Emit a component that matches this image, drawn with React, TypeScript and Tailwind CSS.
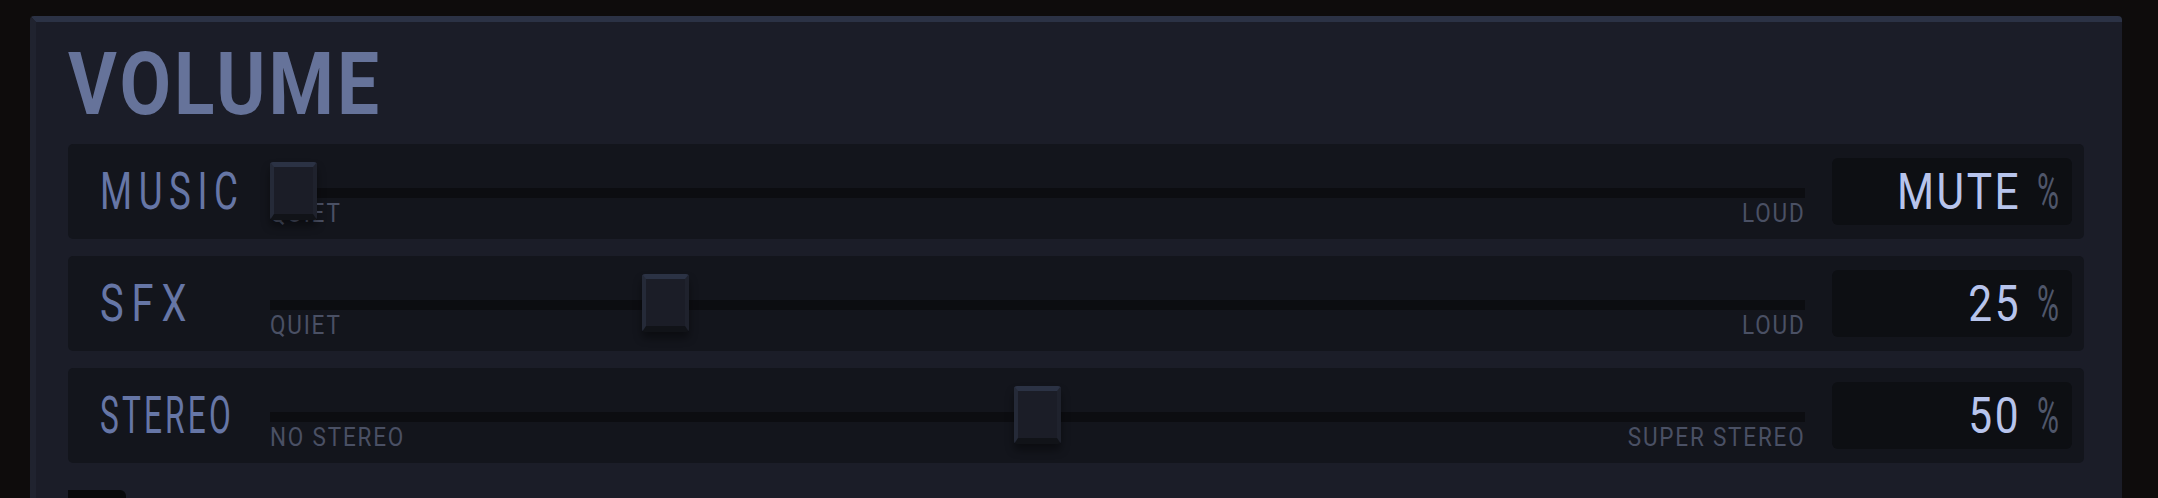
interface Channel {
  name: string;
  nameClass: string;
  value: number;
  display: string;
  low: string;
  high: string;
}

const channels: Channel[] = [
  {
    name: 'MUSIC',
    nameClass: 'scale-x-[0.72] tracking-[0.18em]',
    value: 0,
    display: 'MUTE',
    low: 'QUIET',
    high: 'LOUD',
  },
  {
    name: 'SFX',
    nameClass: 'scale-x-[0.78] tracking-[0.2em]',
    value: 25,
    display: '25',
    low: 'QUIET',
    high: 'LOUD',
  },
  {
    name: 'STEREO',
    nameClass: 'scale-x-[0.62] tracking-[0.1em]',
    value: 50,
    display: '50',
    low: 'NO STEREO',
    high: 'SUPER STEREO',
  },
];

function Row({ ch }: { ch: Channel }) {
  return (
    <div className="flex h-[95px] items-center rounded-[5px] bg-[#13151c] pl-8 pr-3">
      <div className="w-[170px] shrink-0">
        <span className={`inline-block origin-left text-[51px] leading-none text-[#6676a6] ${ch.nameClass}`}>
          {ch.name}
        </span>
      </div>

      <div className="relative h-full flex-1 pt-[44px]">
        <div className="h-[10px] bg-[#0c0d11]" />
        <div className="mt-[3px] flex justify-between text-[25px] leading-none tracking-[0.08em] text-[#4a5064]">
          <span className="inline-block origin-left scale-x-[0.9]">{ch.low}</span>
          <span className="inline-block origin-right scale-x-[0.9]">{ch.high}</span>
        </div>
        <div
          className="absolute top-[18px] h-[58px] w-[47px] rounded-[3px] border-t-[5px] border-r-[4px] border-b-[6px] border-l-[4px] border-t-[#2b3244] border-r-[#1f222d] border-b-[#111318] border-l-[#252a38] bg-[#1b1d27] shadow-[0_6px_8px_rgba(0,0,0,0.4)]"
          style={{ left: `calc(${ch.value / 100} * (100% - 47px))` }}
        />
      </div>

      <div className="ml-[27px] flex h-[67px] w-[240px] shrink-0 items-center justify-end rounded-[6px] bg-[#0d0f13] pr-[15px]">
        <span className="mr-[16px] inline-block origin-right scale-x-[0.85] text-[50px] leading-none tracking-[0.06em] text-[#b7c4ec]">
          {ch.display}
        </span>
        <span className="w-[20px]">
          <span className="inline-block origin-left scale-x-[0.6] text-[50px] leading-none text-[#4f566a]">%</span>
        </span>
      </div>
    </div>
  );
}

export default function App() {
  return (
    <div className="h-[498px] w-full overflow-hidden bg-[#0e0c0c] pl-[30px] pr-[36px] pt-[16px] font-['Roboto',sans-serif]">
      <div className="rounded-t-[4px] border-t-[6px] border-l-[6px] border-t-[#2b3245] border-l-[#20232f] bg-[#1b1d28] pl-8 pr-[38px] pt-[18px]">
        <h1 className="mb-4 text-[88px] font-bold leading-none">
          <span className="inline-block origin-left scale-x-[0.85] tracking-[0.04em] text-[#66739a]">VOLUME</span>
        </h1>

        <div className="flex flex-col gap-[17px]">
          {channels.map((ch) => (
            <Row key={ch.name} ch={ch} />
          ))}
        </div>

        <div className="mt-[27px] h-[30px] w-[58px] rounded-tr-[6px] bg-[#08090b]" />
      </div>
    </div>
  );
}
